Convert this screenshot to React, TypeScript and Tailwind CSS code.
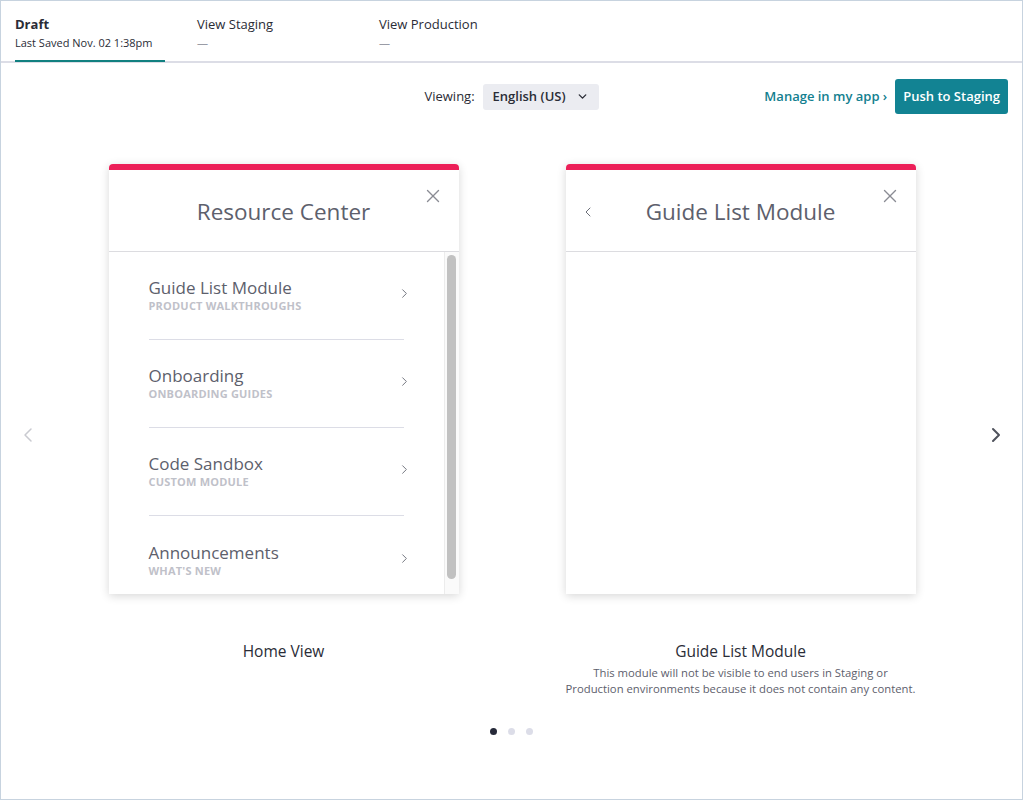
import { ChevronDown, ChevronLeft, ChevronRight, X } from "lucide-react"

const font = { fontFamily: "'Open Sans', Lato, sans-serif" }

const tabs = [
  { label: "Draft", sub: "Last Saved Nov. 02 1:38pm", active: true },
  { label: "View Staging", sub: "—", active: false },
  { label: "View Production", sub: "—", active: false },
]

const modules = [
  { title: "Guide List Module", sub: "Product Walkthroughs" },
  { title: "Onboarding", sub: "Onboarding Guides" },
  { title: "Code Sandbox", sub: "Custom Module" },
  { title: "Announcements", sub: "What's New" },
]

function CardHeader({ title, back }: { title: string; back?: boolean }) {
  return (
    <div className="relative h-[82px] border-b border-[#dcdce0] flex items-center justify-center">
      {back && (
        <ChevronLeft size={16} strokeWidth={1.5} className="absolute left-[14px] top-[34px] text-[#6b6e78]" />
      )}
      <div className="text-[22.5px] text-[#5d606c] pt-[2px]">{title}</div>
      <X size={22} strokeWidth={1.5} className="absolute right-[15px] top-[15px] text-[#8a8c94]" />
    </div>
  )
}

export default function App() {
  return (
    <div style={font} className="w-[1023px] h-[800px] border border-[#c7d3df] bg-white flex flex-col overflow-hidden">
      {/* Tabs */}
      <div className="flex border-b-2 border-[#dcdde6] px-[14px] h-[62px]">
        {tabs.map((t) => (
          <div key={t.label} className="w-[182px] pt-[14px]">
            <div className={t.active ? "w-[150px] h-[47px] border-b-2 border-[#118080]" : "w-[150px] h-[47px]"}>
              <div className={t.active ? "text-[13px] font-bold text-[#2a2c36] leading-[19px]" : "text-[13px] text-[#2a2c36] leading-[19px]"}>
                {t.label}
              </div>
              <div className={t.active ? "text-[11px] text-[#2a2c36] leading-[18px]" : "text-[11px] text-[#9a9ca6] leading-[18px]"}>
                {t.sub}
              </div>
            </div>
          </div>
        ))}
      </div>

      {/* Toolbar */}
      <div className="grid grid-cols-[1fr_auto_1fr] items-center pt-[16px] px-[14px]">
        <div />
        <div className="flex items-center gap-[8px]">
          <span className="text-[13px] text-[#2a2c36]">Viewing:</span>
          <button className="flex items-center gap-[10px] h-[26px] px-[10px] rounded-[3px] bg-[#ebecf1] text-[13px] font-semibold text-[#2a2c36]">
            English (US)
            <ChevronDown size={13} strokeWidth={2.5} />
          </button>
        </div>
        <div className="flex items-center justify-end">
          <a className="text-[13px] font-semibold text-[#13808f] mr-[8px]">Manage in my app ›</a>
          <button className="h-[35px] px-[8px] rounded-[3px] bg-[#128393] text-white text-[13px] font-semibold">
            Push to Staging
          </button>
        </div>
      </div>

      {/* Carousel */}
      <div className="flex items-start mt-[50px]">
        <div className="w-[107px] pt-[259px] pl-[15px]">
          <ChevronLeft size={24} strokeWidth={1.5} className="text-[#c9cad0]" />
        </div>

        <div className="flex flex-col items-center w-[351px]">
          <div className="w-[350px] h-[430px] bg-white rounded-t-[4px] shadow-[0_2px_10px_rgba(0,0,0,0.16)] flex flex-col overflow-hidden">
            <div className="h-[6px] bg-[#ec1f58]" />
            <CardHeader title="Resource Center" />
            <div className="flex flex-1 min-h-0">
              <div className="flex-1 min-h-0 overflow-hidden pl-[40px] pr-[40px]">
                {modules.map((m, i) => (
                  <div
                    key={m.title}
                    className={i < modules.length - 1 ? "h-[88px] border-b border-[#dcdde6] flex items-center" : "h-[88px] flex items-center"}
                  >
                    <div className="flex-1">
                      <div className="text-[17px] text-[#5d606c] leading-[20px]">{m.title}</div>
                      <div className="mt-[1px] text-[11px] font-bold uppercase tracking-[0.2px] text-[#bfc1c9] leading-[14px]">{m.sub}</div>
                    </div>
                    <ChevronRight size={15} strokeWidth={1.5} className="text-[#6b6e78] mr-[-8px] mt-[-4px]" />
                  </div>
                ))}
              </div>
              <div className="w-[15px] border-l border-[#ececec] bg-[#fafafa] py-[3px] pl-[2px]">
                <div className="w-[9px] h-[324px] rounded-full bg-[#c1c1c1]" />
              </div>
            </div>
          </div>
          <div className="mt-[46px] text-[15.5px] text-[#2a2c36]">Home View</div>
        </div>

        <div className="w-[106px]" />

        <div className="flex flex-col items-center w-[351px]">
          <div className="w-[350px] h-[430px] bg-white rounded-t-[4px] shadow-[0_2px_10px_rgba(0,0,0,0.16)] flex flex-col overflow-hidden">
            <div className="h-[6px] bg-[#ec1f58]" />
            <CardHeader title="Guide List Module" back />
            <div className="flex-1" />
          </div>
          <div className="mt-[46px] text-[15.5px] text-[#2a2c36]">Guide List Module</div>
          <div className="mt-[2px] text-[11.3px] text-[#5d606c] leading-[16px] text-center w-[420px]">
            This module will not be visible to end users in Staging or
            <br />
            Production environments because it does not contain any content.
          </div>
        </div>

        <div className="flex-1 pt-[259px] flex justify-end pr-[14px]">
          <ChevronRight size={24} strokeWidth={2} className="text-[#4f525c]" />
        </div>
      </div>

      {/* Dots */}
      <div className="flex justify-center gap-[11px] mt-[31px]">
        <span className="w-[7px] h-[7px] rounded-full bg-[#262a39]" />
        <span className="w-[7px] h-[7px] rounded-full bg-[#dcdde8]" />
        <span className="w-[7px] h-[7px] rounded-full bg-[#dcdde8]" />
      </div>
    </div>
  )
}
